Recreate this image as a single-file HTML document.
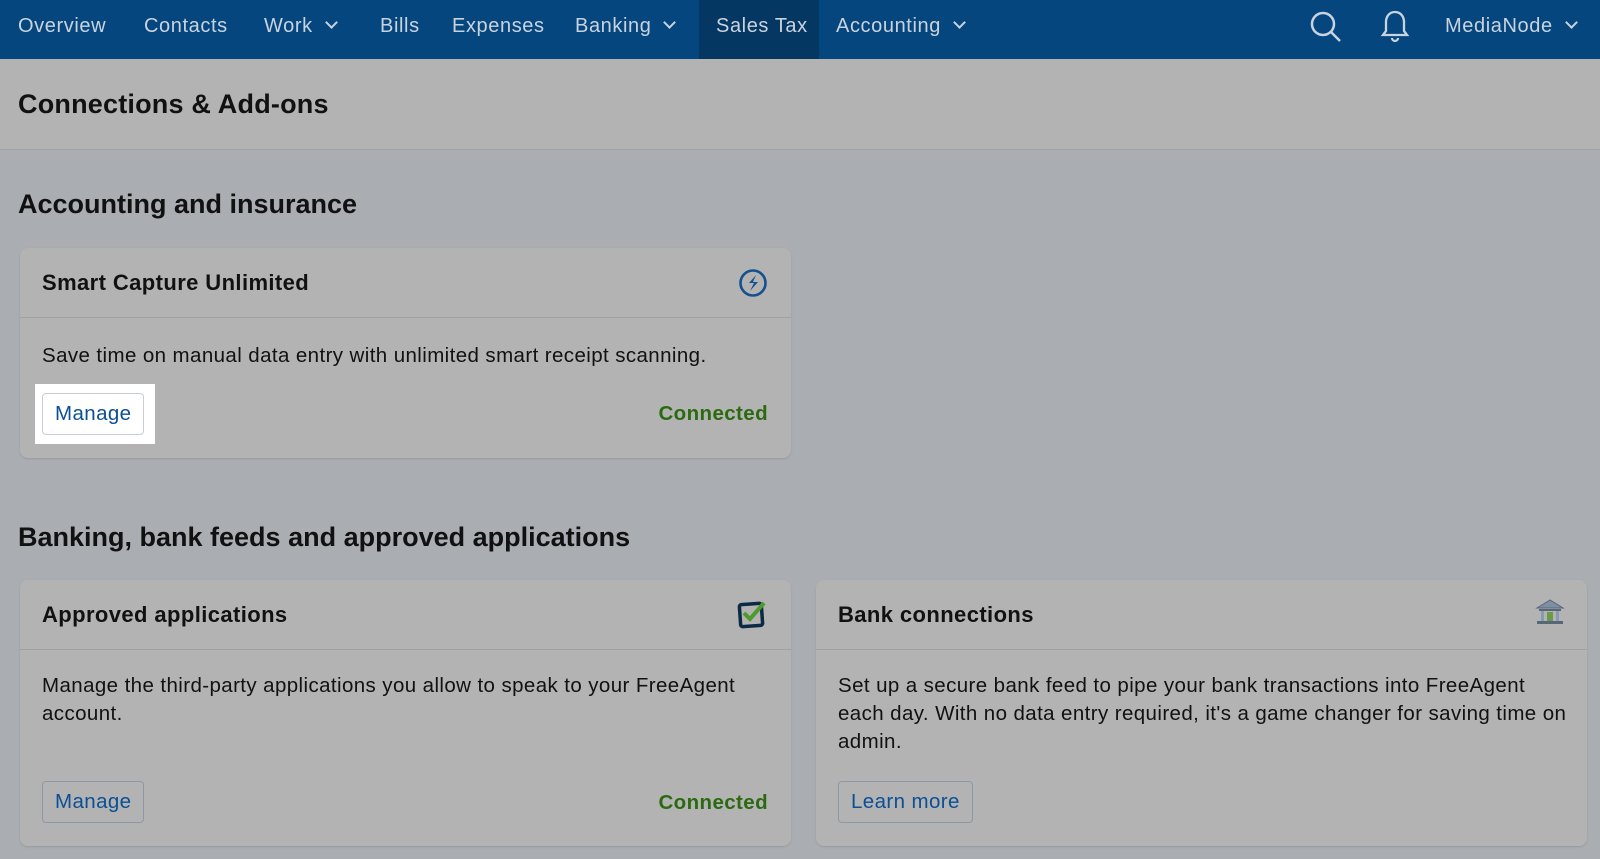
<!DOCTYPE html>
<html><head><meta charset="utf-8"><style>
*{box-sizing:border-box;margin:0;padding:0}
body{width:1600px;height:859px;overflow:hidden;background:#aaaeb3;font-family:"Liberation Sans",sans-serif;color:#111;position:relative;letter-spacing:.4px}
.nav{position:absolute;left:0;top:0;width:1600px;height:59px;background:#05467f}
.nav span{position:absolute;top:15px;font-size:20px;color:#c9d3de;white-space:nowrap;letter-spacing:.6px}
.active{position:absolute;left:699px;top:0;width:120px;height:59px;background:#053763}
.chev{display:inline-block;width:9px;height:9px;border-right:2px solid #c9d3de;border-bottom:2px solid #c9d3de;transform:rotate(45deg);margin-left:14px;position:relative;top:-5px}
.hdr{position:absolute;left:0;top:59px;width:1600px;height:91px;background:#b3b3b3;border-bottom:1px solid #a0a2a5}
h1{position:absolute;left:18px;top:89px;font-size:27px;font-weight:bold;color:#111;letter-spacing:.2px}
h2{position:absolute;left:18px;font-size:27px;font-weight:bold;color:#111;letter-spacing:0}
.card{position:absolute;background:#b3b3b3;border-radius:8px;box-shadow:0 1px 2px rgba(0,0,0,.12)}
.ch{height:70px;border-bottom:1px solid #9fa1a4;position:relative}
.ct{position:absolute;left:22px;top:22px;font-size:22px;font-weight:bold;color:#111}
.p{position:absolute;left:22px;font-size:20.5px;line-height:28px;color:#111}
.btn{position:absolute;height:42px;border:1px solid #8e98a3;border-radius:4px;font-size:20.5px;color:#0b4f95;padding:9px 12px;line-height:22px}
.con{position:absolute;right:23px;font-size:20.5px;font-weight:bold;color:#2c6a12}
</style></head><body>
<div class="nav">
<div class="active"></div>
<span style="left:18px">Overview</span>
<span style="left:144px">Contacts</span>
<span style="left:264px">Work<i class="chev"></i></span>
<span style="left:380px">Bills</span>
<span style="left:452px">Expenses</span>
<span style="left:575px">Banking<i class="chev"></i></span>
<span style="left:716px">Sales Tax</span>
<span style="left:836px">Accounting<i class="chev"></i></span>
<svg style="position:absolute;left:1309px;top:10px" width="34" height="34" viewBox="0 0 34 34" fill="none" stroke="#c9d3de" stroke-width="2.5"><circle cx="14" cy="14" r="11"/><path d="M22 22l9 9"/></svg>
<svg style="position:absolute;left:1380px;top:9px" width="30" height="34" viewBox="0 0 30 34" fill="none" stroke="#c9d3de" stroke-width="2.3"><path d="M15 3c-6 0-9 5-9 10v9l-3 4h24l-3-4v-9c0-5-3-10-9-10z"/><path d="M12 29a3 3 0 006 0"/></svg>
<span style="left:1445px">MediaNode<i class="chev"></i></span>
</div>
<div class="hdr"></div>
<h1>Connections &amp; Add-ons</h1>
<h2 style="top:189px">Accounting and insurance</h2>
<div class="card" style="left:20px;top:248px;width:771px;height:210px">
<div class="ch"><div class="ct">Smart Capture Unlimited</div>
<svg style="position:absolute;left:718px;top:20px" width="30" height="30" viewBox="0 0 30 30"><circle cx="15" cy="15" r="12.5" fill="none" stroke="#15508f" stroke-width="2.6"/><path d="M18 7l-7 8h5l-4 8 8-9h-5z" fill="#15508f"/></svg></div>
<div class="p" style="top:94px">Save time on manual data entry with unlimited smart receipt scanning.</div>
<div style="position:absolute;left:15px;top:136px;width:120px;height:60px;background:#fff"></div>
<div class="btn" style="left:22px;top:145px;background:#fff;border-color:#c8ced5">Manage</div>
<div class="con" style="top:154px">Connected</div>
</div>
<h2 style="top:522px">Banking, bank feeds and approved applications</h2>
<div class="card" style="left:20px;top:580px;width:771px;height:266px">
<div class="ch"><div class="ct">Approved applications</div>
<svg style="position:absolute;left:716px;top:16px" width="34" height="34" viewBox="0 0 34 34"><rect x="4" y="8" width="22" height="22" rx="2" fill="none" stroke="#0d2a45" stroke-width="3.5" transform="rotate(-4 15 19)"/><path d="M8 17l6 6 14-16" fill="none" stroke="#4d9a2d" stroke-width="4"/></svg></div>
<div class="p" style="top:92px">Manage the third-party applications you allow to speak to your FreeAgent<br>account.</div>
<div class="btn" style="left:22px;top:201px">Manage</div>
<div class="con" style="top:211px">Connected</div>
</div>
<div class="card" style="left:816px;top:580px;width:771px;height:266px">
<div class="ch"><div class="ct">Bank connections</div>
<svg style="position:absolute;left:719px;top:18px" width="30" height="28" viewBox="0 0 30 28"><path d="M15 2L2 10h26z" fill="#7d8fa3" stroke="#56677a"/><rect x="4" y="11" width="22" height="2" fill="#56677a"/><rect x="6" y="13" width="3" height="10" fill="#8a9bb0"/><rect x="21" y="13" width="3" height="10" fill="#8a9bb0"/><rect x="12" y="14" width="6" height="9" fill="#6a9a4a"/><rect x="2" y="23" width="26" height="3" fill="#56677a"/></svg></div>
<div class="p" style="top:92px">Set up a secure bank feed to pipe your bank transactions into FreeAgent<br>each day. With no data entry required, it's a game changer for saving time on<br>admin.</div>
<div class="btn" style="left:22px;top:201px">Learn more</div>
</div>
</body></html>
